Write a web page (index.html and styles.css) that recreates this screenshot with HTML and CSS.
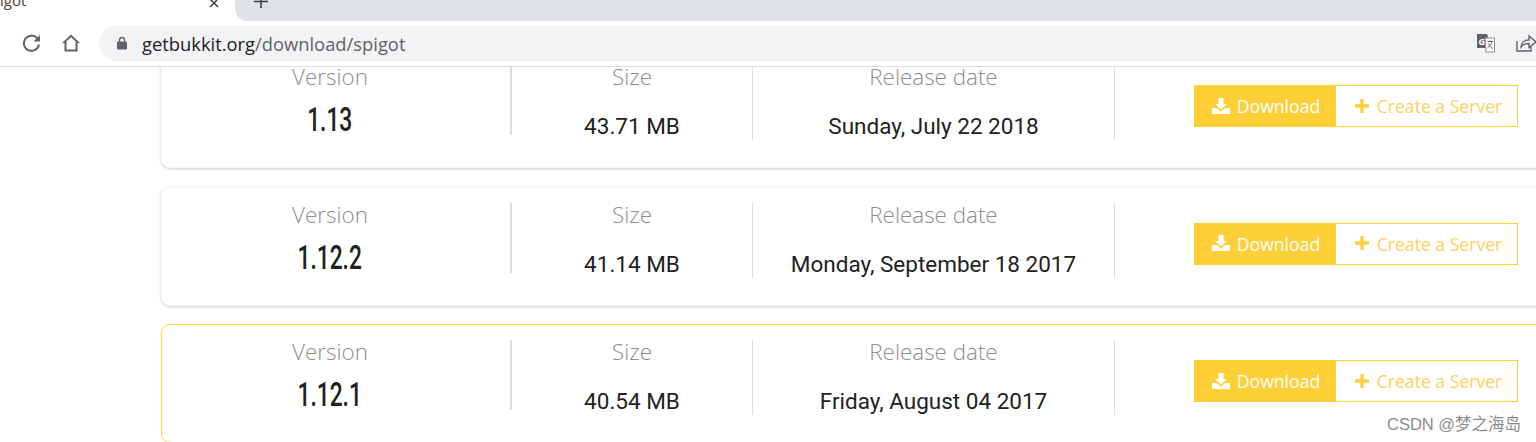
FILE: index.html
```html
<!DOCTYPE html>
<html lang="en">
<head>
    <meta charset="UTF-8">
    <meta name="viewport" content="width=device-width, initial-scale=1.0">
    <title>Download Spigot</title>
    <link rel="stylesheet" href="styles.css">
</head>
<body>
    <!-- Browser tab strip -->
    <div class="tab-strip">
        <div class="tab">
            <span class="tab-title">igot</span>
            <svg class="tab-close" width="10" height="10" viewBox="0 0 10 10"><path d="M1 -1 L9 7 M9 -1 L1 7" stroke="#3c4043" stroke-width="1.5" fill="none"/></svg>
        </div>
        <div class="tab-rest">
            <svg class="new-tab" width="16" height="16" viewBox="0 0 16 16"><path d="M8 -6 V8 M1 1.500 H15" stroke="#3c4043" stroke-width="1.600" fill="none"/></svg>
        </div>
    </div>

    <!-- Browser toolbar -->
    <div class="toolbar">
        <svg class="tool-icon reload" width="20" height="20" viewBox="0 0 20 20"><path d="M15.300 5.300 A7.600 7.600 0 1 0 17 11.500" stroke="#5f6368" stroke-width="2" fill="none"/><path d="M18 2 V8.500 H11.500 Z" fill="#5f6368"/></svg>
        <svg class="tool-icon home" width="20" height="20" viewBox="0 0 20 20"><path d="M10 1.500 L19 10 H16.500 V18.500 H3.500 V10 H1 Z M5.500 16.500 H14.500 V8.300 L10 4.200 L5.500 8.300 Z" fill="#5f6368" fill-rule="evenodd"/></svg>
        <div class="omnibox">
            <svg class="lock" width="12" height="14" viewBox="0 0 12 14"><path d="M3.500 6 V4 A2.500 2.500 0 0 1 8.500 4 V6" stroke="#5f6368" stroke-width="1.300" fill="none"/><rect x="1" y="5.500" width="10" height="8" rx="1" fill="#5f6368"/></svg>
            <span class="url"><span class="url-host">getbukkit.org</span>/download/spigot</span>
            <svg class="translate" width="20" height="20" viewBox="0 0 20 20">
                <path d="M1 1 H11 L16 15 H1 Z" fill="#5f6368"/>
                <path d="M9 5 H18.500 V19 H10 Z" fill="#fff" stroke="#8a8d91" stroke-width="1"/>
                <text x="2.500" y="11.500" class="translate-g">G</text>
                <path d="M11.500 8.500 H17 M14 7.500 V8.500 M16 8.500 C15 12 13 14 11.500 15 M12.500 10.500 C13.500 13 15 14.500 17 15.500" stroke="#5f6368" stroke-width="1" fill="none"/>
            </svg>
            <svg class="share" width="20" height="20" viewBox="0 0 20 20"><path d="M1 8 V18 H15 V14" stroke="#5f6368" stroke-width="1.400" fill="none"/><path d="M5 14 C5.500 9.500 8.500 7 13 7 V3 L20 9 L13 14.500 V10.500 C9.500 10.500 7 11.500 5 14 Z" stroke="#5f6368" stroke-width="1.400" fill="none"/></svg>
        </div>
    </div>

    <!-- Download list, scrolled so that the first card is cut off -->
    <div class="viewport">
        <div class="download-list">
            <div class="card">
                <div class="col col-version">
                    <span class="label">Version</span>
                    <span class="version-number">1.13</span>
                </div>
                <div class="col col-size">
                    <span class="label">Size</span>
                    <span class="value">43.71 MB</span>
                </div>
                <div class="col col-date">
                    <span class="label">Release date</span>
                    <span class="value">Sunday, July 22 2018</span>
                </div>
                <div class="actions">
                    <a class="btn btn-download"><svg class="btn-icon" width="18" height="16" viewBox="0 0 18 16"><path d="M6.500 0 H11.500 V6 H15 L9 11.500 L3 6 H6.500 Z M0 10 H4.500 L9 13.500 L13.500 10 H18 V16 H0 Z" fill="#fff"/></svg>Download</a>
                    <a class="btn btn-server"><svg class="btn-icon" width="14" height="14" viewBox="0 0 14 14"><path d="M5.300 0 H8.700 V5.300 H14 V8.700 H8.700 V14 H5.300 V8.700 H0 V5.300 H5.300 Z" fill="#ffcf37"/></svg>Create a Server</a>
                </div>
            </div>
            <div class="card">
                <div class="col col-version">
                    <span class="label">Version</span>
                    <span class="version-number">1.12.2</span>
                </div>
                <div class="col col-size">
                    <span class="label">Size</span>
                    <span class="value">41.14 MB</span>
                </div>
                <div class="col col-date">
                    <span class="label">Release date</span>
                    <span class="value">Monday, September 18 2017</span>
                </div>
                <div class="actions">
                    <a class="btn btn-download"><svg class="btn-icon" width="18" height="16" viewBox="0 0 18 16"><path d="M6.500 0 H11.500 V6 H15 L9 11.500 L3 6 H6.500 Z M0 10 H4.500 L9 13.500 L13.500 10 H18 V16 H0 Z" fill="#fff"/></svg>Download</a>
                    <a class="btn btn-server"><svg class="btn-icon" width="14" height="14" viewBox="0 0 14 14"><path d="M5.300 0 H8.700 V5.300 H14 V8.700 H8.700 V14 H5.300 V8.700 H0 V5.300 H5.300 Z" fill="#ffcf37"/></svg>Create a Server</a>
                </div>
            </div>
            <div class="card card-active">
                <div class="col col-version">
                    <span class="label">Version</span>
                    <span class="version-number">1.12.1</span>
                </div>
                <div class="col col-size">
                    <span class="label">Size</span>
                    <span class="value">40.54 MB</span>
                </div>
                <div class="col col-date">
                    <span class="label">Release date</span>
                    <span class="value">Friday, August 04 2017</span>
                </div>
                <div class="actions">
                    <a class="btn btn-download"><svg class="btn-icon" width="18" height="16" viewBox="0 0 18 16"><path d="M6.500 0 H11.500 V6 H15 L9 11.500 L3 6 H6.500 Z M0 10 H4.500 L9 13.500 L13.500 10 H18 V16 H0 Z" fill="#fff"/></svg>Download</a>
                    <a class="btn btn-server"><svg class="btn-icon" width="14" height="14" viewBox="0 0 14 14"><path d="M5.300 0 H8.700 V5.300 H14 V8.700 H8.700 V14 H5.300 V8.700 H0 V5.300 H5.300 Z" fill="#ffcf37"/></svg>Create a Server</a>
                </div>
            </div>
        </div>
    </div>

    <div class="watermark">CSDN @梦之海岛</div>
</body>
</html>
```

FILE: styles.css
```css
html, body {
    height: 100%;
}
body {
    margin: 0;
    padding: 0;
    background-color: white;
    color: #212121;
    font-family: "Open Sans", sans-serif;
    display: flex;
    flex-direction: column;
    overflow: hidden;
}

/* Browser tab strip */
.tab-strip {
    display: flex;
    height: 21px;
    flex-shrink: 0;
    overflow: hidden;
}
.tab {
    width: 235px;
    display: flex;
    justify-content: space-between;
    align-items: flex-start;
    padding-right: 16px;
    box-sizing: border-box;
}
.tab-title {
    font-size: 15px;
    line-height: 15px;
    margin-top: -7px;
    color: #5a3a36;
}
.tab-rest {
    flex: 1;
    background-color: #dee1e6;
    border-bottom-left-radius: 12px;
    padding-left: 18px;
}
.new-tab {
    display: block;
}

/* Browser toolbar */
.toolbar {
    height: 46px;
    flex-shrink: 0;
    box-sizing: border-box;
    border-bottom: 1px solid #dadce0;
    display: flex;
    align-items: center;
    padding-left: 22px;
    padding-bottom: 1px;
}
.tool-icon {
    flex-shrink: 0;
}
.home {
    margin-left: 19px;
}
.omnibox {
    flex: 1;
    height: 35px;
    margin-left: 18px;
    background-color: #f1f3f4;
    border-radius: 18px 0 0 18px;
    display: flex;
    align-items: center;
    padding-left: 17px;
}
.lock {
    flex-shrink: 0;
}
.url {
    flex: 1;
    margin-left: 14px;
    font-size: 18.35px;
    color: #5f6368;
}
.url-host {
    color: #202124;
}
.translate-g {
    font-family: "Open Sans", sans-serif;
    font-size: 9px;
    font-weight: 700;
    fill: #fff;
}
.share {
    margin-left: 20px;
}

/* Download cards */
.viewport {
    flex: 1;
    overflow: hidden;
    min-height: 0;
}
.download-list {
    margin-top: -18px;
    margin-left: 161px;
    margin-right: -40px;
    display: flex;
    flex-direction: column;
    gap: 18.5px;
}
.card {
    height: 119px;
    flex-shrink: 0;
    box-sizing: border-box;
    background-color: white;
    border: 1px solid #f7f7f7;
    border-radius: 9px;
    box-shadow: 0 1px 3px rgba(0, 0, 0, 0.2);
    display: flex;
    align-items: flex-start;
    padding-top: 15px;
}
.card-active {
    border-color: #ffd740;
    box-shadow: none;
}
.col {
    height: 75px;
    box-sizing: border-box;
    border-right: 1px solid #dcdcdc;
    display: flex;
    flex-direction: column;
    align-items: center;
}
.col-version {
    width: 350px;
    height: 70px;
    padding-right: 12px;
    border-right-width: 2px;
}
.col-size {
    width: 241px;
}
.col-date {
    width: 362px;
}
.label {
    font-size: 22.4px;
    font-weight: 300;
    line-height: 20px;
    margin-top: 2px;
    color: #8d8d8d;
}
.version-number {
    font-family: Roboto, sans-serif;
    font-weight: 500;
    font-size: 33px;
    line-height: 40px;
    margin-top: 13px;
    color: #212121;
    transform: scaleX(0.69);
}
.value {
    font-family: Roboto, sans-serif;
    font-size: 22.5px;
    line-height: 26px;
    margin-top: 26px;
    color: #212121;
}
.actions {
    display: flex;
    margin-left: 79px;
    margin-top: 20px;
}
.btn {
    height: 42px;
    box-sizing: border-box;
    display: flex;
    align-items: center;
    justify-content: center;
    font-size: 17.6px;
    text-decoration: none;
}
.btn-icon {
    margin-right: 7px;
    margin-bottom: 1px;
}
.btn-download {
    width: 142px;
    padding-left: 2px;
    background-color: #ffcf37;
    color: white;
}
.btn-server {
    width: 182px;
    padding-left: 4px;
    background-color: white;
    border: 1px solid #ffcf37;
    border-left: none;
    color: #ffcf62;
}
.btn-server .btn-icon {
    margin-right: 8px;
}

/* Screenshot watermark */
.watermark {
    position: absolute;
    left: 1387px;
    top: 413px;
    font-family: "Liberation Sans", "Noto Sans CJK SC", sans-serif;
    font-size: 16.5px;
    line-height: 22px;
    color: #8c8c8c;
}
```
